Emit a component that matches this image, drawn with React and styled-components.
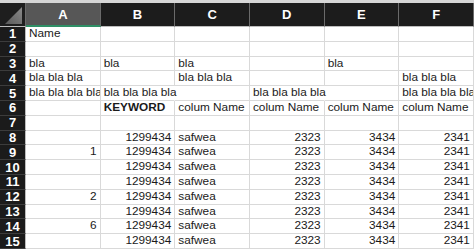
import React from "react";
import styled, { createGlobalStyle } from "styled-components";

const Global = createGlobalStyle`
  html, body { margin: 0; padding: 0; background: #fff; }
  body { font-family: "Liberation Sans", Arial, sans-serif; overflow: hidden; }
`;

const Sheet = styled.div`
  width: 474px;
  height: 251px;
  overflow: hidden;
  border-top: 3px solid #d6d6d6;
  box-sizing: border-box;
`;

const Grid = styled.div`
  display: grid;
  grid-template-columns: 26px repeat(6, 74.67px);
  grid-template-rows: 24px repeat(15, 14.8px);
`;

const Corner = styled.div`
  background: #1e1e1e;
  border-right: 1px solid #6a6a6a;
  border-bottom: 1px solid #bdbdbd;
  position: relative;
  overflow: hidden;
`;

const ColHead = styled.div`
  background: ${(p) => (p.$active ? "#575757" : "#1c1c1c")};
  color: #fff;
  font-weight: bold;
  font-size: 13px;
  display: flex;
  align-items: center;
  justify-content: center;
  border-right: 1px solid #6a6a6a;
  border-bottom: ${(p) => (p.$active ? "2px solid #2f8f66" : "1px solid #bdbdbd")};
  box-sizing: border-box;
`;

const RowHead = styled.div`
  background: #1b1b1b;
  color: #fff;
  font-weight: bold;
  font-size: 13px;
  display: flex;
  align-items: center;
  justify-content: center;
  border-right: 1px solid #bdbdbd;
  border-bottom: 1px solid #3c3c3c;
  box-sizing: border-box;
`;

const Cell = styled.div`
  font-size: 11.8px;
  color: #1a1a1a;
  font-weight: ${(p) => (p.$bold ? "bold" : "normal")};
  white-space: nowrap;
  display: flex;
  align-items: center;
  justify-content: ${(p) => (p.$right ? "flex-end" : "flex-start")};
  padding: 0 3px;
  border-right: 1px solid ${(p) => (p.$spill ? "transparent" : "#d9d9d9")};
  border-bottom: 1px solid #d9d9d9;
  box-sizing: border-box;
  overflow: ${(p) => (p.$spill ? "visible" : "hidden")};
  position: relative;
  z-index: ${(p) => (p.$spill ? 1 : 0)};
  line-height: 1;
`;

const cols = ["A", "B", "C", "D", "E", "F"];

const T = (text, opts = {}) => ({ text, ...opts });

const rows = [
  [T("Name"), T(""), T(""), T(""), T(""), T("")],
  [T(""), T(""), T(""), T(""), T(""), T("")],
  [T("bla"), T("bla"), T("bla"), T(""), T("bla"), T("")],
  [T("bla bla bla"), T(""), T("bla bla bla"), T(""), T(""), T("bla bla bla")],
  [
    T("bla bla bla bla"),
    T("bla bla bla bla", { spill: true }),
    T(""),
    T("bla bla bla bla", { spill: true }),
    T(""),
    T("bla bla bla bla"),
  ],
  [T(""), T("KEYWORD", { bold: true }), T("colum Name"), T("colum Name"), T("colum Name"), T("colum Name")],
  [T(""), T(""), T(""), T(""), T(""), T("")],
];

const aVals = ["", "1", "", "", "2", "", "6", ""];
aVals.forEach((a) => {
  rows.push([
    T(a, { right: true }),
    T("1299434", { right: true }),
    T("safwea"),
    T("2323", { right: true }),
    T("3434", { right: true }),
    T("2341", { right: true }),
  ]);
});

export default function App() {
  return (
    <>
      <Global />
      <Sheet>
        <Grid>
          <Corner>
            <svg width="26" height="24" style={{ position: "absolute", left: 0, top: 0 }}>
              <defs>
                <linearGradient id="cg" x1="0" y1="1" x2="1" y2="0">
                  <stop offset="0" stopColor="#5a5a5a" />
                  <stop offset="1" stopColor="#8a8a8a" />
                </linearGradient>
              </defs>
              <polygon points="22,4 22,21 5,21" fill="url(#cg)" />
            </svg>
          </Corner>
          {cols.map((c, i) => (
            <ColHead key={c} $active={i === 0}>
              {c}
            </ColHead>
          ))}
          {rows.map((r, ri) => (
            <React.Fragment key={ri}>
              <RowHead>{ri + 1}</RowHead>
              {r.map((cell, ci) => (
                <Cell key={ci} $right={cell.right} $bold={cell.bold} $spill={cell.spill}>
                  {cell.text}
                </Cell>
              ))}
            </React.Fragment>
          ))}
        </Grid>
      </Sheet>
    </>
  );
}
